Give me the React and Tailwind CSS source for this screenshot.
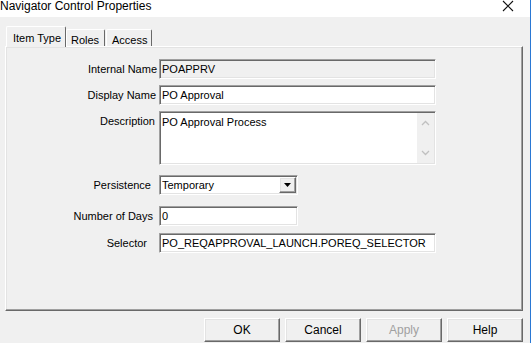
import React from 'react';

const sunken =
  'border border-t-[#a0a0a0] border-l-[#a0a0a0] border-r-white border-b-white shadow-[inset_1px_1px_0_#696969,inset_-1px_-1px_0_#e3e3e3]';
const raised =
  'border border-t-white border-l-white border-r-[#696969] border-b-[#696969] shadow-[inset_-1px_-1px_0_#a0a0a0,inset_1px_1px_0_#e3e3e3]';

const Row = ({ label, pr, mt, top, children }) => (
  <div className={`flex ${top ? 'items-start' : 'items-center'} ${mt}`}>
    <div className={`w-[153px] shrink-0 text-right ${pr} ${top ? 'pt-[2px]' : ''}`}>{label}</div>
    {children}
  </div>
);

const Field = ({ value, w, bg = 'bg-white' }) => (
  <div className={`${w} h-[20px] ${bg} ${sunken} pl-[2px] leading-[18px] whitespace-nowrap`}>{value}</div>
);

const Button = ({ children, disabled }) => (
  <div
    className={`w-[76px] h-[24px] flex items-center justify-center bg-[#f0f0f0] ${raised} text-[12px] ${
      disabled ? 'text-[#a0a0a0]' : 'text-black'
    }`}
  >
    {children}
  </div>
);

export default function App() {
  return (
    <div
      className="w-[531px] h-[343px] bg-[#f0f0f0] overflow-hidden border-r border-[#2a78d4] text-[11px] text-black"
      style={{ fontFamily: '"Liberation Sans", Arial, sans-serif' }}
    >
      {/* title bar */}
      <div className="h-[17px] bg-white flex items-start justify-between">
        <div className="text-[12px] leading-[14px] -mt-[1px] text-black">
          Navigator Control Properties
        </div>
        <svg width="12" height="12" viewBox="0 0 12 12" className="mr-[16px]">
          <path d="M1 1L11 11M11 1L1 11" stroke="#111" strokeWidth="1.1" fill="none" />
        </svg>
      </div>

      {/* tabs */}
      <div className="flex items-end h-[21px] mt-[8px] pl-[6px] relative z-10">
        <div className="h-[21px] w-[60px] -mb-[1px] bg-[#f0f0f0] border-t border-l border-white border-r border-r-[#696969] rounded-t-[2px] pl-[6px] pt-[3px]">
          Item Type
        </div>
        <div className="h-[17px] w-[39px] bg-[#f0f0f0] border-t border-l border-white border-r border-r-[#696969] rounded-t-[2px] pl-[4px] pt-[2px]">
          Roles
        </div>
        <div className="h-[17px] w-[46px] ml-[1px] bg-[#f0f0f0] border-t border-l border-white border-r border-r-[#696969] rounded-t-[2px] pl-[5px] pt-[2px]">
          Access
        </div>
      </div>

      {/* panel */}
      <div className={`mx-[5px] w-[518px] h-[265px] ${raised} pt-[12px]`}>
        <Row label="Internal Name" pr="pr-[2px]" mt="">
          <Field value="POAPPRV" w="w-[277px]" bg="bg-[#f0f0f0]" />
        </Row>
        <Row label="Display Name" pr="pr-[3px]" mt="mt-[6px]">
          <Field value="PO Approval" w="w-[277px]" />
        </Row>
        <Row label="Description" pr="pr-[4px]" mt="mt-[6px]" top>
          <div className={`w-[277px] h-[54px] bg-white ${sunken} flex`}>
            <div className="flex-1 pl-[2px] pt-[2px]">PO Approval Process</div>
            <div className="w-[17px] mt-[1px] mb-[1px] mr-[1px] bg-[#f0f0f0] flex flex-col items-center justify-between py-[7px]">
              <svg width="9" height="6" viewBox="0 0 9 6">
                <path d="M1 5L4.5 1.5L8 5" stroke="#c0c0c0" strokeWidth="1.3" fill="none" />
              </svg>
              <svg width="9" height="6" viewBox="0 0 9 6">
                <path d="M1 1L4.5 4.5L8 1" stroke="#c0c0c0" strokeWidth="1.3" fill="none" />
              </svg>
            </div>
          </div>
        </Row>
        <Row label="Persistence" pr="pr-[8px]" mt="mt-[10px]">
          <div className={`w-[139px] h-[20px] bg-white ${sunken} flex`}>
            <div className="flex-1 pl-[2px] leading-[18px]">Temporary</div>
            <div className={`w-[17px] h-[16px] mt-[1px] mr-[1px] bg-[#f0f0f0] ${raised} flex items-center justify-center`}>
              <svg width="7" height="4" viewBox="0 0 7 4">
                <path d="M0 0H7L3.5 4Z" fill="#000" />
              </svg>
            </div>
          </div>
        </Row>
        <Row label="Number of Days" pr="pr-[6px]" mt="mt-[11px]">
          <Field value="0" w="w-[139px]" />
        </Row>
        <Row label="Selector" pr="pr-[12px]" mt="mt-[7px]">
          <Field value="PO_REQAPPROVAL_LAUNCH.POREQ_SELECTOR" w="w-[277px]" />
        </Row>
      </div>

      {/* buttons */}
      <div className="flex justify-end gap-[5px] mt-[7px] pr-[7px]">
        <Button>OK</Button>
        <Button>Cancel</Button>
        <Button disabled>Apply</Button>
        <Button>Help</Button>
      </div>
    </div>
  );
}
